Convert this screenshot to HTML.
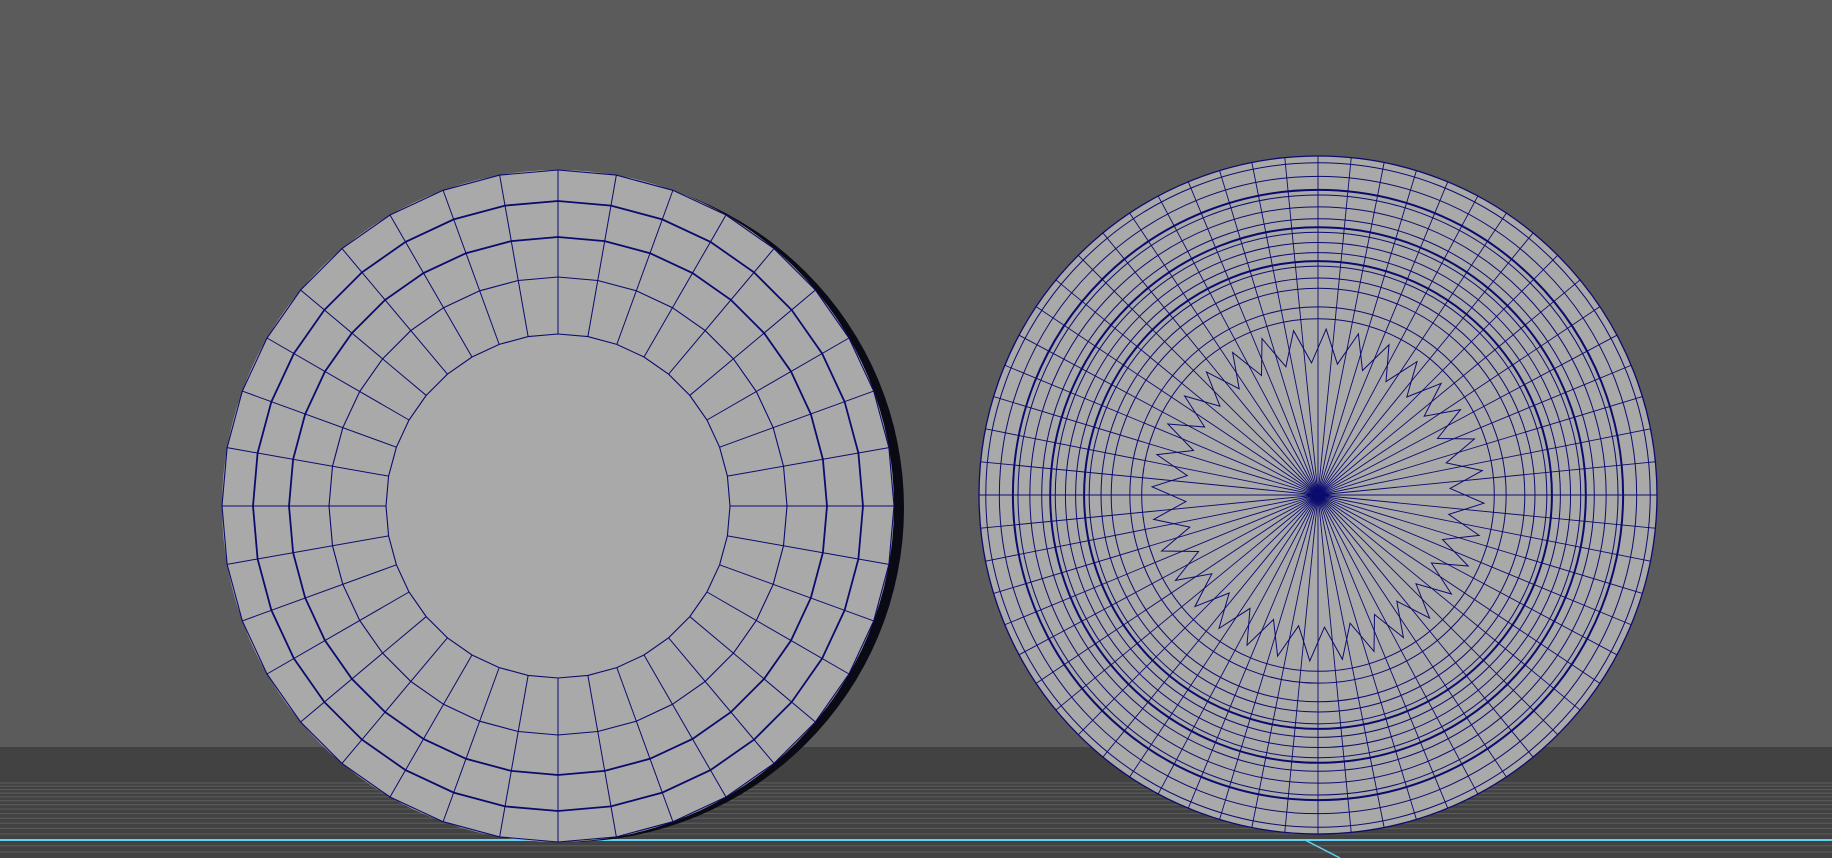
<!DOCTYPE html>
<html><head><style>
html,body{margin:0;padding:0;background:#5b5b5b;overflow:hidden}
svg{display:block}
</style></head><body>
<svg id="s" width="1832" height="858" xmlns="http://www.w3.org/2000/svg">
<rect width="1832" height="858" fill="#5b5b5b"/>
<rect y="747" width="1832" height="111" fill="#424242"/>
<g id="floor"></g>
<g id="L"></g>
<g id="R"></g>
</svg>
<script>
const NS="http://www.w3.org/2000/svg";
function el(p,t,a){const e=document.createElementNS(NS,t);for(const k in a)e.setAttribute(k,a[k]);p.appendChild(e);return e;}
const F=document.getElementById('floor');
for(let y=783;y<858;y+=3.2+ (y-783)*0.05){el(F,'line',{x1:0,x2:1832,y1:y,y2:y,stroke:'#5a5a5a','stroke-width':1.2});}
el(F,'rect',{x:0,y:839,width:1832,height:2,fill:'#5fd3f0'});
el(F,'line',{x1:1305,y1:840,x2:1340,y2:858,stroke:'#5fd3f0','stroke-width':1.5});
const LC='#0b0b6e';
const L=document.getElementById('L');
let cx=558,cy=506,R=336;
el(L,'ellipse',{cx:cx+10,cy:cy+2,rx:R,ry:R-2,fill:'#0a0a14'});
el(L,'circle',{cx:cx,cy:cy,r:R,fill:'#a9a9a9'});
const N=36, rings=[336,305,269,229,172];
function poly(r,n,ox,oy,rot){let p=[];for(let i=0;i<n;i++){const a=i/n*2*Math.PI+rot;p.push((ox+r*Math.sin(a)).toFixed(1)+','+(oy-r*Math.cos(a)).toFixed(1));}return p.join(' ');}
rings.forEach((r,i)=>el(L,'polygon',{points:poly(r,N,cx,cy,0),fill:'none',stroke:LC,'stroke-width':i==1||i==2?1.8:1.1}));
for(let i=0;i<N;i++){const a=i/N*2*Math.PI;el(L,'line',{x1:cx+172*Math.sin(a),y1:cy-172*Math.cos(a),x2:cx+336*Math.sin(a),y2:cy-336*Math.cos(a),stroke:LC,'stroke-width':1});}
const Rg=document.getElementById('R');
cx=1318;cy=495;R=339;
el(Rg,'circle',{cx:cx,cy:cy,r:R,fill:'#a9a9a9',stroke:LC,'stroke-width':1.3});
const rr=[0.98,0.94,0.9,0.885,0.85,0.815,0.79,0.775,0.745,0.715,0.69,0.675,0.64,0.61,0.555,0.52];
const thick=[0.9,0.79,0.69];
rr.forEach(f=>el(Rg,'circle',{cx:cx,cy:cy,r:R*f,fill:'none',stroke:LC,'stroke-width':thick.includes(f)?2:1}));
const M=64;
for(let i=0;i<M;i++){const a=i/M*2*Math.PI;el(Rg,'line',{x1:cx,y1:cy,x2:cx+R*Math.sin(a),y2:cy-R*Math.cos(a),stroke:LC,'stroke-width':0.9});}
let pts=[];
for(let i=0;i<M;i++){const a=(i+0.5)/M*2*Math.PI;const f=i%2?0.39:0.49;pts.push([cx+R*f*Math.sin(a),cy-R*f*Math.cos(a)]);}
el(Rg,'polygon',{points:pts.map(p=>p[0].toFixed(1)+','+p[1].toFixed(1)).join(' '),fill:'none',stroke:LC,'stroke-width':1});
el(Rg,'circle',{cx:cx,cy:cy,r:5,fill:LC});
</script>
</body></html>
